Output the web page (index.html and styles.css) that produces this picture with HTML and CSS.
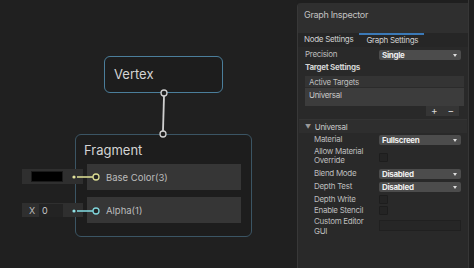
FILE: index.html
```html
<!DOCTYPE html>
<html>
<head>
  <meta name="viewport" content="width=device-width, initial-scale=1.0">
  <link rel="stylesheet" href="styles.css">
</head>
<body>
  <div class="window">
    <!-- Graph canvas: node positions are the content itself -->
    <main class="canvas">
      <div class="node vertex">
        <div class="node-title">Vertex</div>
      </div>

      <div class="node fragment">
        <div class="node-title">Fragment</div>
        <div class="slot"><span class="slot-label">Base Color(3)</span></div>
        <div class="slot"><span class="slot-label">Alpha(1)</span></div>
      </div>

      <div class="inline-input color-input">
        <span class="swatch"></span>
      </div>
      <div class="inline-input float-input">
        <span class="axis">X</span>
        <span class="num-field">0</span>
      </div>

      <svg class="wires" width="297" height="268" viewBox="0 0 297 268">
        <line x1="164" y1="96" x2="163" y2="131" stroke="#d0d0d0" stroke-width="1.8"/>
        <circle cx="164" cy="93" r="3" fill="#1e1e1e" stroke="#d0d0d0" stroke-width="1.3"/>
        <circle cx="163" cy="134" r="3" fill="#1e1e1e" stroke="#d0d0d0" stroke-width="1.3"/>

        <circle cx="74" cy="177" r="1.6" fill="#e2e29c"/>
        <line x1="77" y1="177" x2="93" y2="177" stroke="#d9da92" stroke-width="1.6"/>
        <circle cx="96" cy="177" r="3" fill="#242424" stroke="#d9da92" stroke-width="1.3"/>

        <circle cx="74" cy="211" r="1.6" fill="#8fe0e4"/>
        <line x1="77" y1="211" x2="93" y2="211" stroke="#7fd4da" stroke-width="1.6"/>
        <circle cx="96" cy="211" r="3" fill="#242424" stroke="#7fd4da" stroke-width="1.3"/>
      </svg>
    </main>

    <aside class="inspector">
      <header class="insp-head">Graph Inspector</header>
      <nav class="tabs">
        <span class="tab">Node Settings</span>
        <span class="tab active">Graph Settings</span>
      </nav>

      <div class="insp-body">
        <div class="prop top">
          <span class="prop-label">Precision</span>
          <span class="dropdown">Single</span>
        </div>

        <div class="section-label">Target Settings</div>

        <div class="target-list">
          <div class="list-head">Active Targets</div>
          <div class="list-item">Universal</div>
        </div>
        <div class="list-foot">
          <span class="list-btn">+</span>
          <span class="list-btn">&minus;</span>
        </div>

        <div class="foldout"><span class="arrow">&#9660;</span>Universal</div>

        <div class="props">
          <div class="prop">
            <span class="prop-label">Material</span>
            <span class="dropdown">Fullscreen</span>
          </div>
          <div class="prop tall">
            <span class="prop-label">Allow Material<br>Override</span>
            <span class="checkbox"></span>
          </div>
          <div class="prop">
            <span class="prop-label">Blend Mode</span>
            <span class="dropdown">Disabled</span>
          </div>
          <div class="prop">
            <span class="prop-label">Depth Test</span>
            <span class="dropdown">Disabled</span>
          </div>
          <div class="prop small">
            <span class="prop-label">Depth Write</span>
            <span class="checkbox"></span>
          </div>
          <div class="prop small">
            <span class="prop-label">Enable Stencil</span>
            <span class="checkbox"></span>
          </div>
          <div class="prop tall gui">
            <span class="prop-label">Custom Editor<br>GUI</span>
            <span class="text-field"></span>
          </div>
        </div>
      </div>
    </aside>
    <div class="edge"></div>
  </div>
</body>
</html>
```

FILE: styles.css
```css
* {
  box-sizing: border-box;
  margin: 0;
  padding: 0;
}

body {
  background-color: #1f1f1f;
  font-family: Inter, "Noto Sans", sans-serif;
  overflow: hidden;
}

.window {
  display: flex;
  width: 474px;
  height: 268px;
}

/* ---------- graph canvas ---------- */

.canvas {
  position: relative;
  width: 297px;
  height: 268px;
  background-color: #202020;
}

.node {
  position: absolute;
  background-color: #1d1d1d;
  border-radius: 6px;
}

.node-title {
  color: #d4d4d4;
  font-size: 13px;
}

.vertex {
  left: 104px;
  top: 56px;
  width: 119px;
  height: 37px;
  border: 1.5px solid #4b7e9b;
  padding: 9px 0 0 9px;
}

.fragment {
  left: 75px;
  top: 134px;
  width: 177px;
  height: 103px;
  border: 1.5px solid #3b5564;
  padding: 0 10px 0 8px;
  display: flex;
  flex-direction: column;
  gap: 7px;
}

.fragment .node-title {
  height: 22px;
  padding-top: 8px;
  line-height: 14px;
}

.slot {
  height: 26px;
  margin-left: 3px;
  background-color: #363636;
  display: flex;
  align-items: center;
  padding-left: 19px;
}

.slot-label {
  color: #bcbcbc;
  font-size: 9.5px;
}

.inline-input {
  position: absolute;
  left: 22px;
  width: 61px;
  background-color: #2f2f2f;
  display: flex;
  align-items: center;
}

.color-input {
  top: 169px;
  height: 15px;
  padding-left: 9px;
}

.swatch {
  width: 32px;
  height: 11px;
  background-color: #000;
  border: 1px solid #1a1a1a;
}

.float-input {
  top: 203px;
  height: 14px;
  padding-left: 7px;
}

.axis {
  color: #bdbdbd;
  font-size: 9px;
  width: 10px;
}

.num-field {
  width: 24px;
  height: 13px;
  padding-left: 3px;
  background-color: #232323;
  color: #c8c8c8;
  font-size: 9px;
  line-height: 13px;
}

.wires {
  position: absolute;
  left: 0;
  top: 0;
}

/* ---------- inspector ---------- */

.inspector {
  width: 171px;
  height: 265px;
  margin-top: 3px;
  background-color: #292929;
  border-left: 1px solid #383838;
  border-top-left-radius: 4px;
  color: #bdbdbd;
  font-size: 8px;
  letter-spacing: -0.3px;
}

.insp-head {
  height: 30px;
  padding: 6px 0 0 6px;
  background-color: #2f2f2f;
  color: #c2c2c2;
  font-size: 9px;
  border-top-left-radius: 4px;
}

.tabs {
  display: flex;
  height: 14px;
  background-color: #262626;
}

.tab {
  padding: 0 6px;
  line-height: 13px;
  color: #cfcfcf;
}

.tab.active {
  border-top: 2px solid #3b79b7;
  line-height: 11px;
  padding-left: 7px;
}

.insp-body {
  padding: 2px 4px 0 7px;
}

.prop {
  display: flex;
  align-items: center;
  height: 11px;
  margin-bottom: 2px;
}

.prop-label {
  width: 65px;
  flex-shrink: 0;
  line-height: 9px;
}

.prop.top .prop-label {
  width: 74px;
}

.dropdown {
  position: relative;
  width: 82px;
  height: 10px;
  padding-left: 3px;
  background-color: #4c4c4c;
  border-radius: 2px;
  color: #eeeeee;
  font-weight: bold;
  line-height: 10px;
}

.dropdown::after {
  content: "";
  position: absolute;
  right: 4px;
  top: 4px;
  border-left: 2.5px solid transparent;
  border-right: 2.5px solid transparent;
  border-top: 3px solid #dddddd;
}

.section-label {
  height: 10px;
  margin-top: 2px;
  line-height: 10px;
  font-weight: bold;
  color: #d2d2d2;
}

.target-list {
  width: 159px;
  margin-top: 4px;
  background-color: #3c3c3c;
}

.list-head {
  height: 12px;
  line-height: 12px;
  padding-left: 4px;
  background-color: #343434;
  border-bottom: 1px solid #2b2b2b;
}

.list-item {
  height: 18px;
  padding: 2px 0 0 4px;
  color: #c8c8c8;
}

.list-foot {
  display: flex;
  justify-content: space-around;
  width: 33px;
  height: 10px;
  margin-left: 121px;
  background-color: #353535;
  font-size: 10px;
  line-height: 9px;
  color: #d8d8d8;
}

.foldout {
  height: 14px;
  margin-top: 3px;
  margin-left: -6px;
  margin-right: -3px;
  padding-left: 6px;
  line-height: 13px;
  background-color: #2e2e2e;
  border-top: 1px solid #333333;
  color: #c8c8c8;
}

.arrow {
  font-size: 6px;
  margin-right: 4px;
  color: #9a9a9a;
  vertical-align: 1px;
}

.props {
  padding-left: 9px;
  margin-top: 1px;
}

.prop.tall {
  height: 19px;
  align-items: flex-start;
}

.prop.small {
  height: 10px;
  margin-bottom: 1px;
}

.checkbox {
  width: 9px;
  height: 9px;
  background-color: #242424;
  border: 1px solid #1d1d1d;
  border-radius: 1px;
}

.prop.tall .checkbox {
  margin-top: 6px;
}

.prop.gui {
  height: 20px;
}

.prop.gui .prop-label {
  line-height: 10px;
}

.text-field {
  width: 82px;
  height: 11px;
  margin-top: 4px;
  background-color: #262626;
  border: 1px solid #202020;
}

.edge {
  width: 6px;
  border-left: 1px solid #363636;
  background-color: #1f1f1f;
}
```
